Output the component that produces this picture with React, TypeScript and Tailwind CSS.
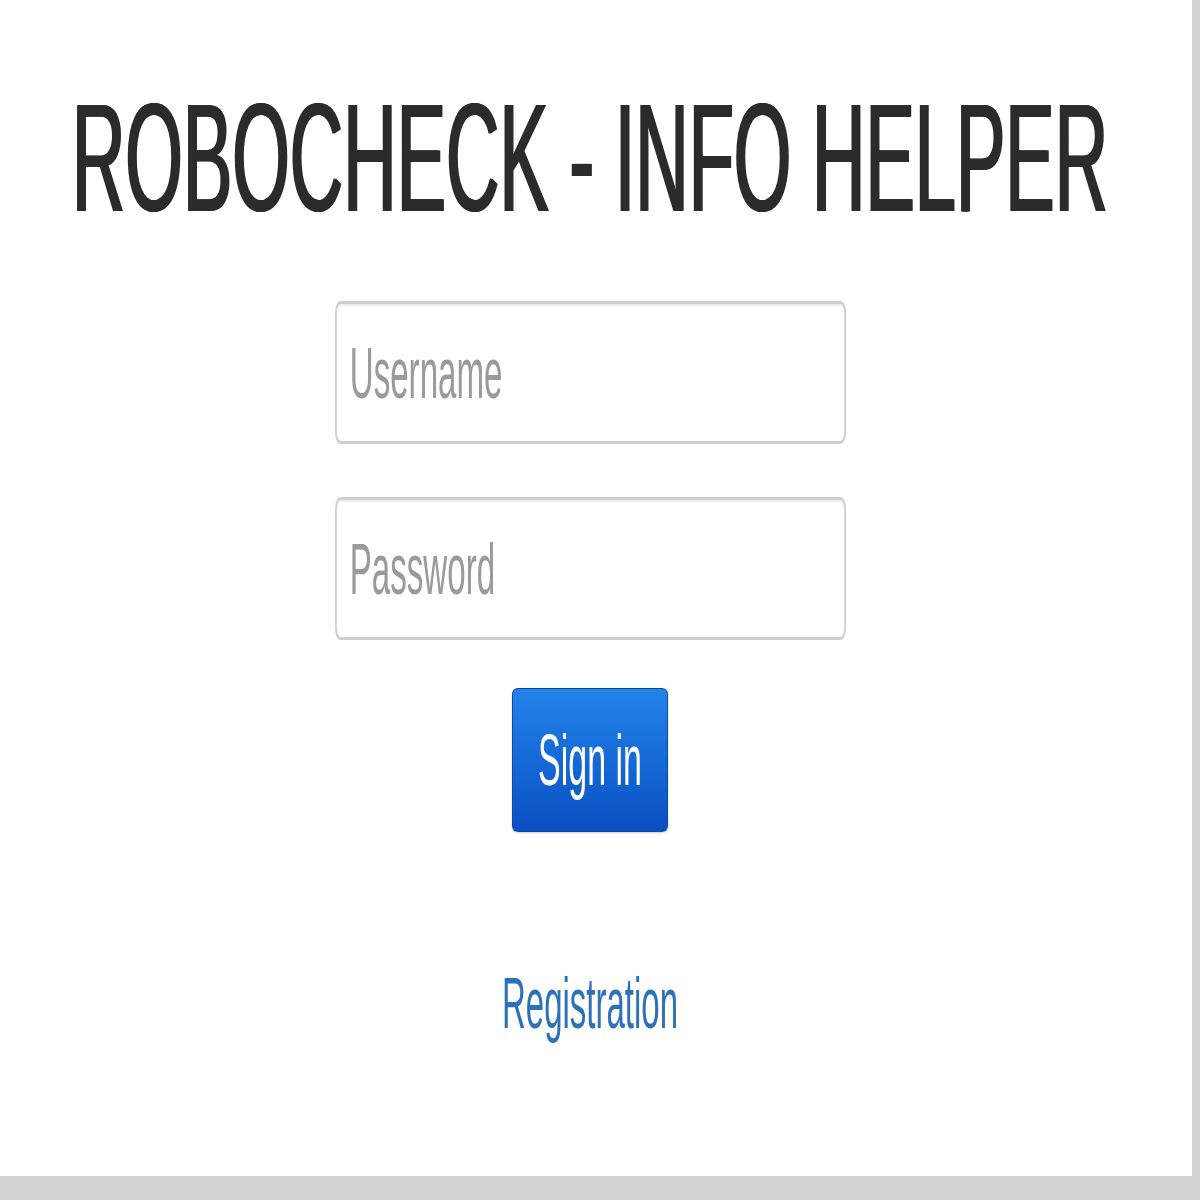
import React from "react";

const font = { fontFamily: '"Liberation Sans", Arial, sans-serif' };

function Field({ placeholder, type }: { placeholder: string; type: string }) {
  return (
    <div className="h-[143px] w-[511px] overflow-hidden">
      <input
        type={type}
        placeholder={placeholder}
        className="h-full w-[1111px] origin-left scale-x-[0.46] rounded-[12px] border-x-[4px] border-y-[3px] border-[#cfcfcf] bg-white px-[28px] text-[72px] leading-none text-[#555] shadow-[inset_0_2px_3px_rgba(0,0,0,0.08)] outline-none placeholder:text-[#9a9a9a]"
        style={font}
      />
    </div>
  );
}

export default function App() {
  return (
    <div className="h-[1200px] w-[1200px] overflow-hidden bg-[#d2d2d2]" style={font}>
      <div className="h-[1176px] w-[1192px] bg-white">
        <div className="flex w-[1180px] flex-col items-center pt-[82px]">
          <div className="flex h-[154px] items-center">
            <h1 className="scale-y-[2.08] whitespace-nowrap text-[74px] leading-none font-normal text-[#2b2b2b] [text-shadow:1px_0_0_#2b2b2b,-1px_0_0_#2b2b2b]">
              ROBOCHECK - INFO HELPER
            </h1>
          </div>

          <form className="mt-[65px] flex flex-col items-center">
            <Field placeholder="Username" type="text" />
            <div className="mt-[53px]">
              <Field placeholder="Password" type="password" />
            </div>
            <button
              type="button"
              className="mt-[48px] flex h-[144px] w-[156px] items-center justify-center rounded-[6px] border border-[#0b4aa8] border-t-[#0a4496] bg-gradient-to-b from-[#2383ea] to-[#0a4fc2] shadow-[0_1px_2px_rgba(0,0,0,0.2)]"
            >
              <span className="scale-y-[2.12] whitespace-nowrap text-[34px] leading-none text-white">
                Sign in
              </span>
            </button>
          </form>

          <div className="mt-[134px] flex h-[72px] items-center">
            <a
              href="#"
              className="scale-y-[2.18] whitespace-nowrap text-[33px] leading-none text-[#2d72b8]"
            >
              Registration
            </a>
          </div>
        </div>
      </div>
    </div>
  );
}
